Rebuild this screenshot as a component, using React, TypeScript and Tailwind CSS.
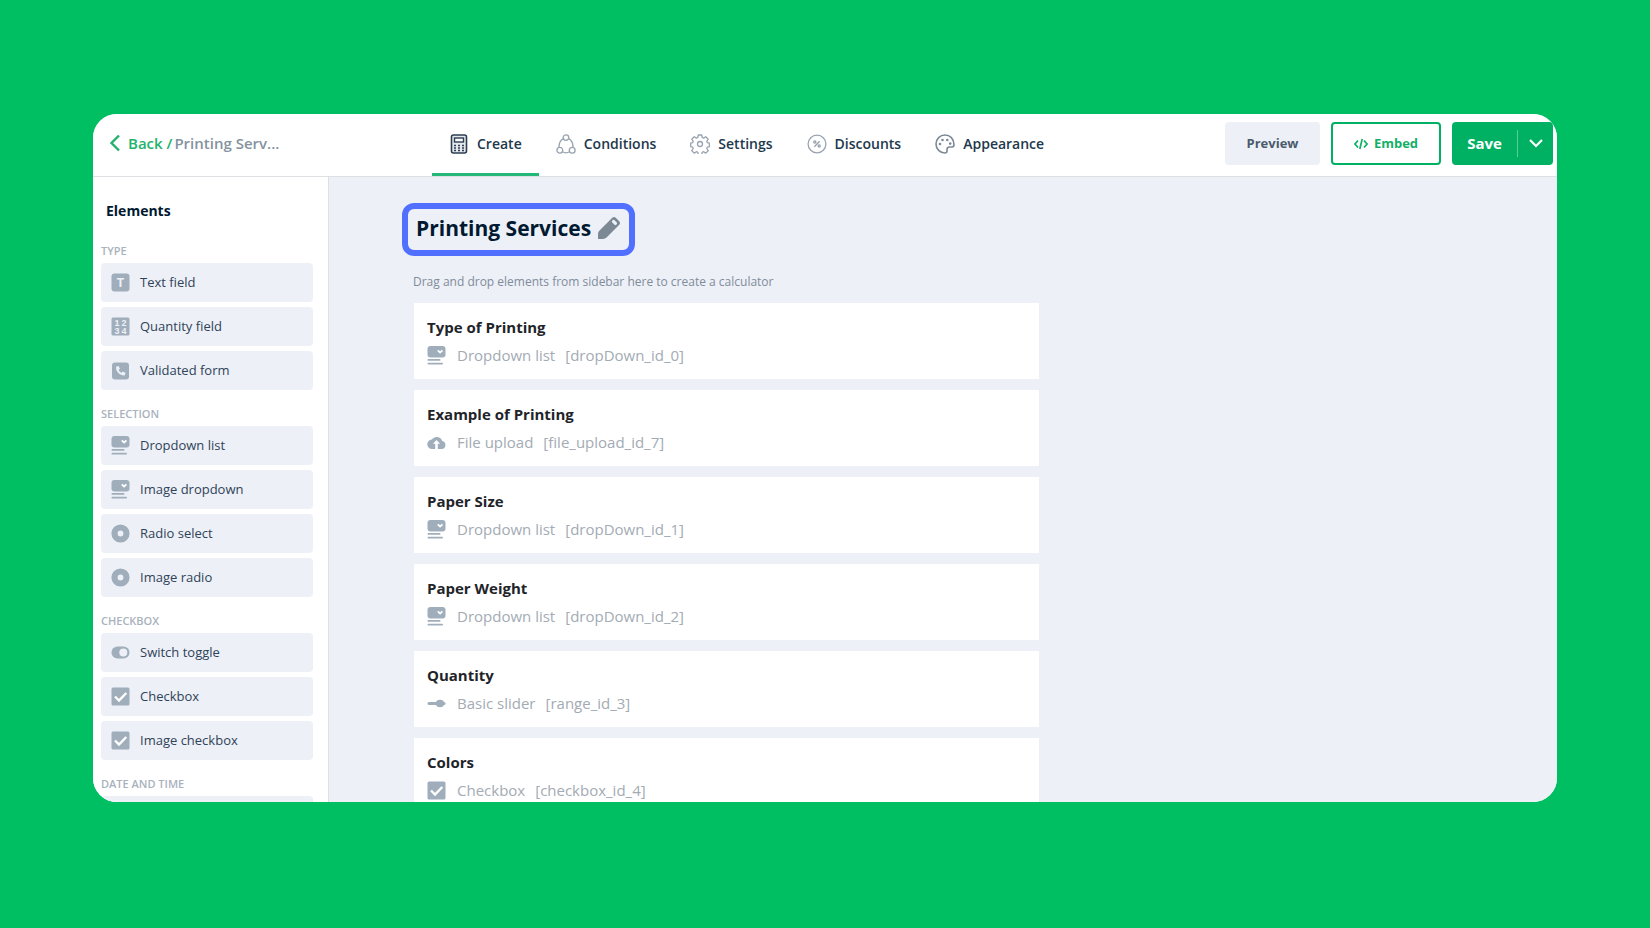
import { JSX } from "react";

type IconName =
  | "text"
  | "quantity"
  | "phone"
  | "dropdown"
  | "radio"
  | "toggle"
  | "checkbox"
  | "upload"
  | "slider";

interface SidebarGroup {
  title: string;
  items: { label?: string; icon?: IconName }[];
}

const sidebarGroups: SidebarGroup[] = [
  {
    title: "TYPE",
    items: [
      { label: "Text field", icon: "text" },
      { label: "Quantity field", icon: "quantity" },
      { label: "Validated form", icon: "phone" },
    ],
  },
  {
    title: "SELECTION",
    items: [
      { label: "Dropdown list", icon: "dropdown" },
      { label: "Image dropdown", icon: "dropdown" },
      { label: "Radio select", icon: "radio" },
      { label: "Image radio", icon: "radio" },
    ],
  },
  {
    title: "CHECKBOX",
    items: [
      { label: "Switch toggle", icon: "toggle" },
      { label: "Checkbox", icon: "checkbox" },
      { label: "Image checkbox", icon: "checkbox" },
    ],
  },
  {
    title: "DATE AND TIME",
    items: [{}],
  },
];

const fields: { title: string; type: string; id: string; icon: IconName }[] = [
  { title: "Type of Printing", type: "Dropdown list", id: "dropDown_id_0", icon: "dropdown" },
  { title: "Example of Printing", type: "File upload", id: "file_upload_id_7", icon: "upload" },
  { title: "Paper Size", type: "Dropdown list", id: "dropDown_id_1", icon: "dropdown" },
  { title: "Paper Weight", type: "Dropdown list", id: "dropDown_id_2", icon: "dropdown" },
  { title: "Quantity", type: "Basic slider", id: "range_id_3", icon: "slider" },
  { title: "Colors", type: "Checkbox", id: "checkbox_id_4", icon: "checkbox" },
];

const iconShapes: Record<IconName, JSX.Element> = {
  text: (
    <>
      <rect x="0.5" y="0.5" width="18" height="18" rx="3" fill="currentColor" />
      <text x="9.5" y="14" textAnchor="middle" fontSize="13" fontWeight="700" fontFamily="Liberation Mono, monospace" fill="#edf0f7">
        T
      </text>
    </>
  ),
  quantity: (
    <>
      <rect x="0.5" y="0.5" width="18" height="18" rx="1.5" fill="currentColor" />
      <g fill="#edf0f7" fontSize="9" fontWeight="700" fontFamily="Liberation Sans, sans-serif" textAnchor="middle">
        <text x="6" y="8.5">1</text>
        <text x="13" y="8.5">2</text>
        <text x="6" y="17">3</text>
        <text x="13" y="17">4</text>
      </g>
    </>
  ),
  phone: (
    <>
      <rect x="1" y="1.5" width="17" height="17" rx="3" fill="currentColor" />
      <path
        d="M5.6 5.6l2-.6 1.3 2.8-1.2 1.1c.6 1.3 1.5 2.2 2.8 2.8l1.2-1.2 2.8 1.3-.6 2.1c-.1.3-.3.5-.7.5C8.7 14.4 5 10.7 5 6.2c0-.3.2-.5.6-.6z"
        fill="#edf0f7"
      />
    </>
  ),
  dropdown: (
    <>
      <rect x="0.5" y="0" width="18" height="11.5" rx="3" fill="currentColor" />
      <path d="M10.8 4.3l2.3 2.3 2.3-2.3" fill="none" stroke="#fff" strokeWidth="1.8" />
      <rect x="0.5" y="13" width="13" height="1.8" rx="0.9" fill="currentColor" />
      <rect x="0.5" y="16.7" width="15.5" height="1.8" rx="0.9" fill="currentColor" />
    </>
  ),
  radio: <circle cx="9.5" cy="9.5" r="6" fill="none" stroke="currentColor" strokeWidth="6.2" />,
  toggle: (
    <>
      <rect x="0.5" y="3.5" width="18" height="12" rx="6" fill="currentColor" />
      <circle cx="12.3" cy="9.5" r="4" fill="#edf0f7" />
    </>
  ),
  checkbox: (
    <>
      <rect x="0.5" y="0.5" width="18" height="18" rx="1.5" fill="currentColor" />
      <path d="M4 9.5l4 4 7.3-7.5" fill="none" stroke="#fff" strokeWidth="2.4" />
    </>
  ),
  upload: (
    <path
      d="M15.3 8.1A6 6 0 0 0 4.7 6.6 4.7 4.7 0 0 0 5.2 16h9.5a4 4 0 0 0 .6-7.9zM10.8 10.8v5.2H8.2v-5.2H5.9l3.600-3.7 3.6 3.7z"
      fill="currentColor"
    />
  ),
  slider: (
    <>
      <rect x="0.5" y="7.9" width="18" height="3.2" rx="1.6" fill="currentColor" />
      <ellipse cx="13" cy="9.5" rx="4.2" ry="3.7" fill="currentColor" />
    </>
  ),
};

function ElementIcon({ name }: { name: IconName }): JSX.Element {
  return (
    <svg viewBox="0 0 19 19" className="h-[19px] w-[19px] shrink-0 text-[#a0aebb]" aria-hidden="true">
      {iconShapes[name]}
    </svg>
  );
}

const tabs: { label: string; active?: boolean; icon: JSX.Element }[] = [
  {
    label: "Create",
    active: true,
    icon: (
      <g stroke="#2c3e50">
        <rect x="2.5" y="1" width="15" height="18" rx="2" strokeWidth="1.6" fill="#e4e9ee" />
        <rect x="5.5" y="4" width="9" height="4" strokeWidth="1.4" fill="#fff" />
        <path d="M5 11.5h2m2 0h2m2 0h2M5 14h2m2 0h2m2 0h2M5 16.4h2m2 0h2m2 0h2" strokeWidth="1.5" />
      </g>
    ),
  },
  {
    label: "Conditions",
    icon: (
      <g>
        <circle cx="10" cy="3.6" r="2.8" />
        <circle cx="3.8" cy="16.2" r="2.9" />
        <circle cx="16.2" cy="16.2" r="2.9" />
        <path d="M7.3 4.6C4.5 6 2.9 9 3 13.3M12.7 4.6c2.8 1.4 4.4 4.4 4.3 8.7M6.5 17.8c2.3 1.3 4.7 1.3 7 0" />
      </g>
    ),
  },
  {
    label: "Settings",
    icon: (
      <g>
        <circle cx="10" cy="10" r="2.5" />
        <path
          d="M8.3 1h3.4l.5 2.500 1.4.6 2.2-1.4 2.400 2.400-1.400 2.200.6 1.400 2 .5v3.400l-2 .5-.6 1.400 1.400 2.200-2.400 2.400-2.200-1.400-1.400.6-.5 2.300H8.300l-.5-2.300-1.400-.6-2.200 1.400-2.400-2.400 1.400-2.200-.6-1.400L.7 12.600V9.200l1.900-.5.6-1.400-1.400-2.200 2.400-2.400 2.200 1.400 1.400-.6z"
          strokeLinejoin="round"
        />
      </g>
    ),
  },
  {
    label: "Discounts",
    icon: (
      <g>
        <circle cx="10" cy="10" r="8.9" />
        <path d="M12.6 7.2l-5.2 5.6" strokeWidth="1.4" />
        <circle cx="7.8" cy="8" r="1.1" />
        <circle cx="12.2" cy="12" r="1.1" />
      </g>
    ),
  },
  {
    label: "Appearance",
    icon: (
      <g stroke="#7b8997">
        <path
          d="M10 1a9 9 0 0 0 0 18c1.4 0 2-.9 2-2v-1.5c0-1.6 1-2.5 2.5-2.5H17c1.3 0 2-1 2-2.5C19 4.7 15 1 10 1z"
          strokeWidth="1.6"
        />
        <g fill="#7b8997" stroke="none">
          <circle cx="5" cy="10" r="1.3" />
          <circle cx="7.5" cy="6" r="1.3" />
          <circle cx="12.3" cy="6" r="1.3" />
          <circle cx="15.2" cy="9.6" r="1.3" />
        </g>
      </g>
    ),
  },
];

function Header(): JSX.Element {
  return (
    <header className="flex h-[63px] shrink-0 border-b border-[#dddfe2] bg-white">
      <div className="flex w-[339px] shrink-0 items-start pt-[17px] pl-4 text-[15px] leading-6 font-semibold">
        <a href="#back" className="flex items-center text-[#23b26d]">
          <svg viewBox="0 0 12 18" className="mr-[7px] h-[18px] w-3" fill="none" stroke="currentColor" strokeWidth="2.4">
            <path d="M10 1.5L2.5 9l7.5 7.5" />
          </svg>
          Back /
        </a>
        <span className="ml-0.5 text-[#8592a0]">Printing Serv...</span>
      </div>
      <nav className="flex">
        {tabs.map((tab) => (
          <a
            key={tab.label}
            href={`#${tab.label.toLowerCase()}`}
            className={`flex items-center gap-2 border-b-[3px] px-[17px] text-sm font-semibold text-[#22384c] ${
              tab.active ? "border-[#23b877]" : "border-transparent"
            }`}
          >
            <svg viewBox="0 0 20 20" className="h-5 w-5" fill="none" stroke="#98a3b0" strokeWidth="1.3" aria-hidden="true">
              {tab.icon}
            </svg>
            {tab.label}
          </a>
        ))}
      </nav>
      <div className="ml-auto flex gap-[11px] pt-2 pr-1">
        <button className="h-[43px] w-[95px] rounded bg-[#edf0f7] text-[13px] font-bold text-[#4a5b6c]">Preview</button>
        <button className="flex h-[43px] w-[110px] items-center justify-center gap-1.5 rounded border-2 border-[#00b163] bg-white text-[13px] font-bold text-[#12b067]">
          <svg viewBox="0 0 14 12" className="h-3 w-3.5" fill="none" stroke="currentColor" strokeWidth="1.7">
            <path d="M4 2.5L1 6l3 3.5M10 2.5L13 6l-3 3.5M8.2 1L5.8 11" />
          </svg>
          Embed
        </button>
        <div className="flex h-[43px] w-[101px] items-center rounded bg-[#00b163] text-white">
          <button className="h-full flex-1 text-[15px] font-bold">Save</button>
          <span className="h-[27px] w-px bg-[#59cd97]" />
          <button className="flex h-full w-[35px] items-center justify-center" aria-label="More save options">
            <svg viewBox="0 0 14 9" className="h-[9px] w-3.5" fill="none" stroke="currentColor" strokeWidth="2.2">
              <path d="M1 1l6 6 6-6" />
            </svg>
          </button>
        </div>
      </div>
    </header>
  );
}

function Sidebar(): JSX.Element {
  return (
    <aside className="w-[236px] shrink-0 overflow-hidden border-r border-[#dddfe2] bg-white pr-[15px] pl-2">
      <h2 className="pt-6 pl-[5px] text-sm leading-5 font-bold text-[#001931]">Elements</h2>
      <div className="mt-[22px] flex flex-col gap-4">
        {sidebarGroups.map((group) => (
          <section key={group.title}>
            <h3 className="mb-1 text-[11px] leading-4 font-semibold text-[#a9b2bd]">{group.title}</h3>
            <ul className="flex flex-col gap-[5px]">
              {group.items.map((item, index) => (
                <li key={index}>
                  <button className="flex h-[39px] w-full items-center gap-2.5 rounded bg-[#edf0f7] px-2.5 text-[13px] text-[#2f4358]">
                    {item.icon && <ElementIcon name={item.icon} />}
                    {item.label}
                  </button>
                </li>
              ))}
            </ul>
          </section>
        ))}
      </div>
    </aside>
  );
}

function Canvas(): JSX.Element {
  return (
    <main className="flex-1 overflow-hidden bg-[#edf0f7] pt-[26px] pl-[73px]">
      <div className="flex h-[53px] w-fit items-center gap-1.5 rounded-xl border-6 border-[#5170ff] pr-2 pb-1 pl-2">
        <h1 className="text-[21px] leading-7 font-bold text-[#001931]">Printing Services</h1>
        <button aria-label="Rename calculator">
          <svg viewBox="0 0 24 24" className="h-6 w-6 text-[#7c8894]" fill="currentColor">
            <path
              fillRule="evenodd"
              d="M1 23v-5a5 5 0 0 1 1.500-3.500L15 2a2.800 2.800 0 0 1 4 0L22 5a2.800 2.800 0 0 1 0 4L9.500 21.500A5 5 0 0 1 6 23zM14.800 6l3.200 3.200a2.300 2.300 0 0 0 2.200-2.200L17 3.800A2.300 2.300 0 0 0 14.800 6z"
            />
          </svg>
        </button>
      </div>
      <p className="mt-4 pl-[11px] text-xs leading-5 text-[#7f8c9a]">
        Drag and drop elements from sidebar here to create a calculator
      </p>
      <ul className="mt-[11px] ml-3 flex max-w-[625px] flex-col gap-[11px]">
        {fields.map((field) => (
          <li key={field.id} className="h-[76px] bg-white px-[13px] pt-3">
            <h3 className="text-[15px] leading-6 font-bold text-[#1f2429]">{field.title}</h3>
            <div className="mt-1 flex items-center text-[15px] leading-6 text-[#a3abb4]">
              <ElementIcon name={field.icon} />
              <span className="ml-[11px]">{field.type}</span>
              <span className="ml-2.5">[{field.id}]</span>
            </div>
          </li>
        ))}
      </ul>
    </main>
  );
}

export default function App(): JSX.Element {
  return (
    <div className="flex h-screen bg-[#00bf63] px-[93px] pt-[114px] pb-[126px] font-['Open_Sans','Noto_Sans',sans-serif]">
      <div className="flex min-w-0 flex-1 flex-col overflow-hidden rounded-3xl bg-white">
        <Header />
        <div className="flex min-h-0 flex-1">
          <Sidebar />
          <Canvas />
        </div>
      </div>
    </div>
  );
}
